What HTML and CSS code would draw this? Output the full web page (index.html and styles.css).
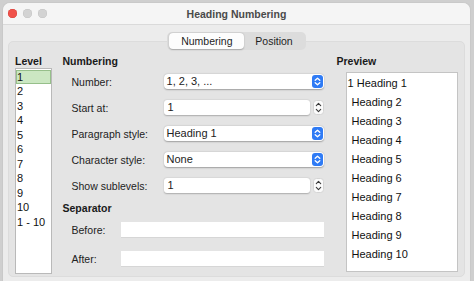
FILE: index.html
```html
<!DOCTYPE html>
<html lang="en">
<head>
    <meta charset="UTF-8">
    <title>Heading Numbering</title>
    <link rel="stylesheet" href="styles.css">
</head>
<body>

<div class="window">
    <div class="titlebar">
        <div class="lights">
            <span class="light red"></span>
            <span class="light"></span>
            <span class="light"></span>
        </div>
        <div class="title">Heading Numbering</div>
    </div>

    <div class="tabs">
        <div class="seg">
            <span class="tab active">Numbering</span>
            <span class="tab">Position</span>
        </div>
    </div>

    <div class="page">
        <div class="col level-col">
            <div class="head">Level</div>
            <div class="level-list">
                <div class="lvl selected">1</div>
                <div class="lvl">2</div>
                <div class="lvl">3</div>
                <div class="lvl">4</div>
                <div class="lvl">5</div>
                <div class="lvl">6</div>
                <div class="lvl">7</div>
                <div class="lvl">8</div>
                <div class="lvl">9</div>
                <div class="lvl">10</div>
                <div class="lvl">1 - 10</div>
            </div>
        </div>

        <div class="col num-col">
            <div class="head">Numbering</div>
            <div class="row">
                <span class="label">Number:</span>
                <div class="combo"><span>1, 2, 3, ...</span>
                    <svg class="blue-step" viewBox="0 0 11 13"><rect width="11" height="13" rx="3" fill="#2f7bf5"/><path d="M3.2 5.3 5.5 3.2 7.8 5.3M3.2 7.7 5.5 9.8 7.8 7.7" fill="none" stroke="#fff" stroke-width="1.3" stroke-linecap="round" stroke-linejoin="round"/></svg>
                </div>
            </div>
            <div class="row">
                <span class="label">Start at:</span>
                <div class="spin">
                    <div class="field">1</div>
                    <svg class="spin-step" viewBox="0 0 11 15"><rect x="0.5" y="0.5" width="10" height="14" rx="3" fill="#fbfbfb" stroke="#d4d4d4"/><path d="M3.3 5.6 5.5 3.4 7.7 5.6M3.3 9.4 5.5 11.6 7.7 9.4" fill="none" stroke="#3a3a3a" stroke-width="1.1" stroke-linecap="round" stroke-linejoin="round"/></svg>
                </div>
            </div>
            <div class="row">
                <span class="label">Paragraph style:</span>
                <div class="combo"><span>Heading 1</span>
                    <svg class="blue-step" viewBox="0 0 11 13"><rect width="11" height="13" rx="3" fill="#2f7bf5"/><path d="M3.2 5.3 5.5 3.2 7.8 5.3M3.2 7.7 5.5 9.8 7.8 7.7" fill="none" stroke="#fff" stroke-width="1.3" stroke-linecap="round" stroke-linejoin="round"/></svg>
                </div>
            </div>
            <div class="row">
                <span class="label">Character style:</span>
                <div class="combo"><span>None</span>
                    <svg class="blue-step" viewBox="0 0 11 13"><rect width="11" height="13" rx="3" fill="#2f7bf5"/><path d="M3.2 5.3 5.5 3.2 7.8 5.3M3.2 7.7 5.5 9.8 7.8 7.7" fill="none" stroke="#fff" stroke-width="1.3" stroke-linecap="round" stroke-linejoin="round"/></svg>
                </div>
            </div>
            <div class="row">
                <span class="label">Show sublevels:</span>
                <div class="spin">
                    <div class="field">1</div>
                    <svg class="spin-step" viewBox="0 0 11 15"><rect x="0.5" y="0.5" width="10" height="14" rx="3" fill="#fbfbfb" stroke="#d4d4d4"/><path d="M3.3 5.6 5.5 3.4 7.7 5.6M3.3 9.4 5.5 11.6 7.7 9.4" fill="none" stroke="#3a3a3a" stroke-width="1.1" stroke-linecap="round" stroke-linejoin="round"/></svg>
                </div>
            </div>

            <div class="head sep-head">Separator</div>
            <div class="row sep-row">
                <span class="label short">Before:</span>
                <div class="text-field"></div>
            </div>
            <div class="row sep-row">
                <span class="label short">After:</span>
                <div class="text-field"></div>
            </div>
        </div>

        <div class="col preview-col">
            <div class="head">Preview</div>
            <div class="preview">
                <div class="pv first">1 Heading 1</div>
                <div class="pv">Heading 2</div>
                <div class="pv">Heading 3</div>
                <div class="pv">Heading 4</div>
                <div class="pv">Heading 5</div>
                <div class="pv">Heading 6</div>
                <div class="pv">Heading 7</div>
                <div class="pv">Heading 8</div>
                <div class="pv">Heading 9</div>
                <div class="pv">Heading 10</div>
            </div>
        </div>
    </div>
</div>

</body>
</html>
```

FILE: styles.css
```css
body {
    margin: 0;
    height: 281px;
    overflow: hidden;
    background: #cfcfcf;
    font-family: "Liberation Sans", Arial, sans-serif;
    font-size: 10.5px;
    color: #222;
}

.window {
    margin: 2px 3px 0 2px;
    height: 279px;
    background: #ececec;
    border: 1px solid #c9c9c9;
    border-bottom: none;
    border-radius: 8px 8px 0 0;
    overflow: hidden;
}

.titlebar {
    position: relative;
    height: 21px;
    background: #f5f5f5;
    border-bottom: 1px solid #dadada;
    display: flex;
    align-items: center;
    justify-content: center;
}

.lights {
    position: absolute;
    left: 5px;
    top: 6px;
    display: flex;
    gap: 6px;
}

.light {
    width: 9px;
    height: 9px;
    border-radius: 50%;
    background: #d3d3d3;
    box-shadow: inset 0 0 0 0.5px #c2c2c2;
}

.light.red {
    background: #f0514a;
    box-shadow: inset 0 0 0 0.5px #d43f38;
}

.title {
    font-weight: bold;
    color: #4a4a4a;
    font-size: 10.5px;
}

.tabs {
    position: relative;
    z-index: 1;
    display: flex;
    justify-content: center;
    margin-top: 7px;
}

.seg {
    display: flex;
    background: #dcdcdc;
    border-radius: 5px;
    padding: 1px 2px;
    height: 16px;
}

.tab {
    display: flex;
    align-items: center;
    justify-content: center;
    padding: 0 11px;
    color: #1e1e1e;
    border-radius: 4px;
}

.tab.active {
    width: 53px;
    background: #fdfdfd;
    box-shadow: 0 0.5px 1.5px rgba(0, 0, 0, 0.25);
}

.page {
    margin: -9px 5px 0 5px;
    height: 221px;
    padding: 13px 6px 0 6px;
    background: #e4e4e4;
    border: 1px solid #dcdcdc;
    border-radius: 5px;
    display: flex;
}

.head {
    font-weight: bold;
    line-height: 13px;
    height: 13px;
    color: #1a1a1a;
}

.level-col {
    width: 37px;
}

.level-list {
    margin-top: 0;
    height: 203px;
    background: #fff;
    border: 1px solid #b9b9b9;
    padding-top: 0.5px;
}

.lvl {
    height: 14.5px;
    line-height: 14.5px;
    font-size: 11px;
    padding-left: 1px;
    color: #111;
}

.lvl.selected {
    height: 12.5px;
    line-height: 12.5px;
    background: #cbe7c2;
    border: 1px solid #96bf8a;
    padding-left: 0;
}

.num-col {
    width: 261px;
    margin-left: 11px;
}

.row {
    height: 26px;
    display: flex;
    align-items: center;
    padding-left: 9px;
}

.label {
    width: 92px;
    flex: none;
    padding-top: 1px;
    color: #222;
}

.label.short {
    width: 49px;
}

.combo {
    width: 158px;
    height: 15px;
    background: #fff;
    border-radius: 4px;
    box-shadow: 0 0.5px 1.5px rgba(0, 0, 0, 0.3);
    display: flex;
    align-items: center;
    justify-content: space-between;
    padding-left: 3px;
    padding-right: 1px;
    font-size: 11px;
}

.blue-step {
    width: 11px;
    height: 13px;
}

.spin {
    width: 160px;
    display: flex;
    align-items: center;
}

.field {
    flex: 1;
    height: 15px;
    line-height: 15px;
    background: #fff;
    border-radius: 3px;
    box-shadow: 0 0.5px 1.5px rgba(0, 0, 0, 0.25);
    padding-left: 4px;
    font-size: 11px;
}

.spin-step {
    width: 11px;
    height: 15px;
    margin-left: 3px;
}

.sep-head {
    margin-top: 4px;
}

.sep-row {
    height: 29px;
}

.text-field {
    width: 203px;
    height: 15px;
    background: #fff;
    box-shadow: 0 1px 0 #d6d6d6;
}

.preview-col {
    width: 123px;
    margin-left: 13px;
}

.preview {
    margin: 4px 0 0 9px;
    height: 197px;
    background: #fff;
    border: 1px solid #c4c4c4;
    padding-top: 0.5px;
}

.pv {
    height: 19px;
    line-height: 19px;
    font-size: 11px;
    padding-left: 5px;
    color: #111;
}

.pv.first {
    padding-left: 1px;
}
```
